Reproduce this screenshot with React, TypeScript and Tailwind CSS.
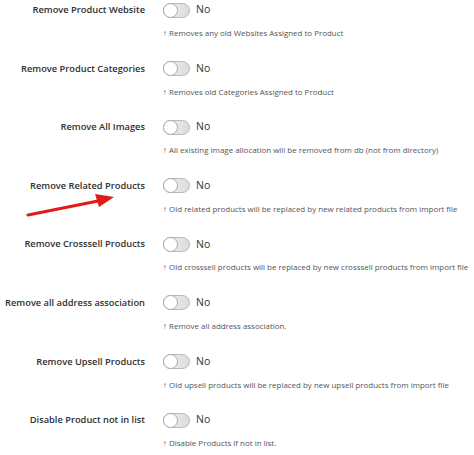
const rows = [
  { label: "Remove Product Website", hint: "Removes any old Websites Assigned to Product" },
  { label: "Remove Product Categories", hint: "Removes old Categories Assigned to Product" },
  { label: "Remove All Images", hint: "All existing image allocation will be removed from db (not from directory)" },
  { label: "Remove Related Products", hint: "Old related products will be replaced by new related products from import file" },
  { label: "Remove Crosssell Products", hint: "Old crosssell products will be replaced by new crosssell products from import file" },
  { label: "Remove all address association", hint: "Remove all address association." },
  { label: "Remove Upsell Products", hint: "Old upsell products will be replaced by new upsell products from import file" },
  { label: "Disable Product not in list", hint: "Disable Products if not in list." },
];

function Toggle() {
  return (
    <span className="flex h-[15px] w-[27px] rounded-full border border-[#b9b9b9] bg-gradient-to-r from-[#f2f2f2] to-[#dcdcdc]">
      <span className="-m-px h-[15px] w-[15px] rounded-full border border-[#a9a9a9] bg-white" />
    </span>
  );
}

export default function App() {
  return (
    <div
      className="relative h-[455px] w-[474px] overflow-hidden bg-white text-[#333]"
      style={{ fontFamily: '"Open Sans", "Liberation Sans", sans-serif' }}
    >
      {rows.map((row) => (
        <div key={row.label} className="flex h-[58.6px]">
          <div className="w-[145px] shrink-0 whitespace-nowrap text-right text-[9.3px] font-semibold leading-[20px] text-[#303030]">
            {row.label}
          </div>
          <div className="ml-[18px] flex flex-col">
            <div className="flex h-[20px] items-center gap-[6px]">
              <Toggle />
              <span className="text-[10.5px] text-[#333]">No</span>
            </div>
            <div className="mt-[7px] whitespace-nowrap text-[7.95px] leading-[12px] text-[#555]">
              ↑ {row.hint}
            </div>
          </div>
        </div>
      ))}
      <svg className="pointer-events-none absolute left-0 top-0" width="474" height="455">
        <line x1="28" y1="215" x2="98" y2="201" stroke="#e11a1a" strokeWidth="3" strokeLinecap="round" />
        <polygon points="114,197 95,194 99,207" fill="#e11a1a" />
      </svg>
    </div>
  );
}
